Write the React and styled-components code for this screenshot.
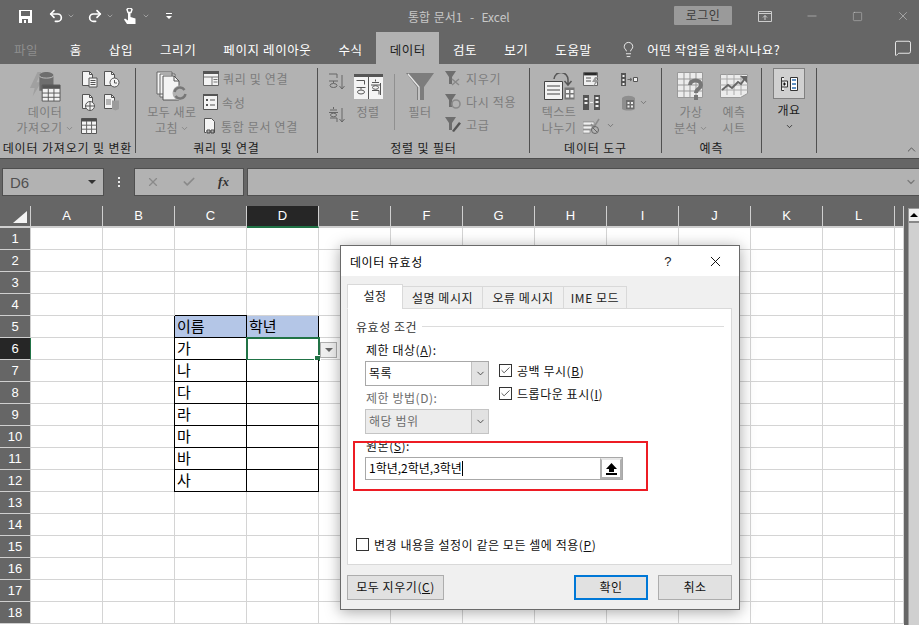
import React from 'react';
import styled, { createGlobalStyle } from 'styled-components';
import { X, Minus, Square, ChevronDown, ChevronUp, Lightbulb, MessageSquare, Undo2, Redo2, Check } from 'lucide-react';

const FONT = '"Noto Sans CJK KR", "Noto Sans", sans-serif';

const GlobalStyle = createGlobalStyle`
  html, body { margin: 0; padding: 0; overflow: hidden; }
  body { font-family: ${FONT}; font-size: 12px; background: #fff; }
  * { box-sizing: border-box; }
`;

const Page = styled.div`
  position: relative;
  width: 919px;
  height: 625px;
  overflow: hidden;
  display: flex;
  flex-direction: column;
  background: #666;
`;

/* title bar */
const TitleBar = styled.div`
  height: 32px;
  flex: none;
  display: flex;
  align-items: center;
  padding-left: 19px;
  color: #d0d0d0;
`;
const QuickTools = styled.div`
  width: 387px;
  display: flex;
  align-items: center;
  color: #fff;
`;
const QuickIcon = styled.span`
  display: flex;
  width: ${p => p.$w || 16}px;
  align-items: center;
`;
const Title = styled.div`
  width: 268px;
  text-align: left;
  padding-left: 2px;
  font-size: 12px;
  color: #c8c8c8;
  word-spacing: 1px;
`;
const Login = styled.div`
  width: 58px;
  height: 19px;
  margin-right: 26px;
  margin-top: -1px;
  background: #9a9a9a;
  border-radius: 1px;
  color: #3a3a3a;
  text-align: center;
  line-height: 18px;
  letter-spacing: .5px;
`;
const WinButtons = styled.div`
  display: flex;
  align-items: center;
  gap: 33px;
  color: #cfcfcf;
`;

/* tabs */
const TabRow = styled.div`
  height: 32px;
  flex: none;
  display: flex;
  align-items: stretch;
  color: #fff;
  font-size: 12.5px;
`;
const Tab = styled.div`
  padding: 2px 13.5px 0;
  display: flex;
  align-items: center;
  letter-spacing: .6px;
  background: ${p => (p.$active ? '#b2b2b2' : 'transparent')};
  color: ${p => (p.$active ? '#1e1e1e' : p.$file ? '#8e8e8e' : '#fff')};
  ${p => p.$file && 'margin: 0 4px 0 0; padding-left: 14px; padding-right: 14px;'}
`;
const TellMe = styled.div`
  display: flex;
  align-items: center;
  gap: 10px;
  margin-left: 15px;
  letter-spacing: .5px;
  padding-top: 2px;
`;
const Comment = styled.div`
  margin-left: auto;
  margin-right: 7px;
  display: flex;
  align-items: center;
`;

/* ribbon */
const Ribbon = styled.div`
  position: relative;
  height: 94px;
  flex: none;
  display: flex;
  background: #b2b2b2;
  padding-top: 4px;
`;
const Group = styled.div`
  width: ${p => p.$w}px;
  height: 85px;
  flex: none;
  display: flex;
  flex-direction: column;
  border-right: 1px solid #505050;
`;
const GroupBody = styled.div`
  height: 71px;
  flex: none;
  display: flex;
  padding-left: ${p => p.$pl || 0}px;
  gap: ${p => p.$gap || 0}px;
`;
const GroupLabel = styled.div`
  height: 17px;
  flex: none;
  line-height: 17px;
  text-align: center;
  color: #1c1c1c;
  white-space: nowrap;
  letter-spacing: .85px;
  font-size: 12px;
`;
const Big = styled.div`
  width: ${p => p.$w}px;
  flex: none;
  display: flex;
  flex-direction: column;
  align-items: center;
  color: ${p => (p.$on ? '#1c1c1c' : '#7c7c7c')};
  line-height: 16px;
  white-space: nowrap;
  letter-spacing: .5px;
`;
const BigIcon = styled.div`
  height: 36px;
  flex: none;
  display: flex;
  align-items: center;
  justify-content: center;
`;
const Arrow = styled(ChevronDown).attrs({ size: 9, strokeWidth: 2 })`
  margin-left: 2px;
  vertical-align: 0;
`;
const SmallGrid = styled.div`
  display: grid;
  grid-template-columns: ${p => p.$cols || '22px 22px'};
  grid-auto-rows: 23px;
  align-items: center;
  justify-items: start;
  margin-left: ${p => p.$ml || 0}px;
`;
const ToolWithArrow = styled.span`
  display: flex;
  align-items: center;
  gap: ${p => p.$gap || 3}px;
  color: #666;
`;
const SmallList = styled.div`
  display: flex;
  flex-direction: column;
  margin-left: ${p => p.$ml || 0}px;
  margin-top: ${p => p.$mt || -1}px;
`;
const SmallRow = styled.div`
  height: ${p => p.$h || 23}px;
  display: flex;
  align-items: center;
  gap: 4px;
  color: #7c7c7c;
  letter-spacing: .65px;
  white-space: nowrap;
`;
const InnerSep = styled.div`
  width: 1px;
  height: 56px;
  margin: 6px 10px 0 4px;
  background: #909090;
`;
const OutlineButton = styled.div`
  width: 32px;
  height: 31px;
  flex: none;
  background: #d0d0d0;
  border: 1px solid #808080;
  display: flex;
  align-items: center;
  justify-content: center;
  margin-bottom: 3px;
`;
const Collapse = styled(ChevronUp).attrs({ size: 13, strokeWidth: 1.5 })`
  position: absolute;
  right: 1px;
  bottom: 2px;
  color: #444;
`;

/* formula bar */
const FormulaBar = styled.div`
  height: 48px;
  flex: none;
  display: flex;
  padding: 9px 0 0 2px;
  align-items: flex-start;
  border-top: 1px solid #4c4c4c;
`;
const NameBox = styled.div`
  width: 102px;
  height: 28px;
  background: #b2b2b2;
  border: 1px solid #4f4f4f;
  display: flex;
  align-items: center;
  justify-content: space-between;
  padding: 0 7px 0 7px;
  font: 15px "Liberation Sans", sans-serif;
  color: #505050;
`;
const DownTri = styled.span`
  width: 0;
  height: 0;
  border-left: 4px solid transparent;
  border-right: 4px solid transparent;
  border-top: 4px solid ${p => p.$color || '#333'};
`;
const Dots = styled.div`
  width: 30px;
  height: 28px;
  display: flex;
  flex-direction: column;
  align-items: center;
  justify-content: center;
  gap: 2px;
  span { width: 2px; height: 2px; background: #e8e8e8; }
`;
const FormulaTools = styled.div`
  width: 110px;
  height: 28px;
  background: #b2b2b2;
  border: 1px solid #4f4f4f;
  display: flex;
  align-items: center;
  justify-content: space-around;
  padding: 0 3px 0 0;
  margin-right: 3px;
  color: #8a8a8a;
`;
const Fx = styled.span`
  font: italic bold 13px "Liberation Serif", serif;
  color: #333;
`;
const FormulaInput = styled.div`
  flex: 1;
  height: 28px;
  background: #b2b2b2;
  border: 1px solid #4f4f4f;
  border-right: 0;
  display: flex;
  align-items: center;
  justify-content: flex-end;
  padding-right: 2px;
  color: #7a7a7a;
`;

/* sheet */
const SheetArea = styled.div`
  flex: 1;
  min-height: 0;
  display: flex;
`;
const Sheet = styled.div`
  width: 904px;
  flex: none;
  display: grid;
  grid-template-columns: 31px repeat(12, 72px) 1fr;
  grid-template-rows: 22px;
  grid-auto-rows: 22px;
  align-content: start;
  background: #fff;
`;
const Corner = styled.div`
  background: #666;
  border-right: 1px solid #cfcfcf;
  border-bottom: 2px solid #cfcfcf;
  display: flex;
  align-items: flex-end;
  justify-content: flex-end;
  padding: 0 3px 3px 0;
  &::after {
    content: '';
    width: 0;
    height: 0;
    border-left: 14px solid transparent;
    border-bottom: 12px solid #f4f4f4;
  }
`;
const ColHead = styled.div`
  background: ${p => (p.$active ? '#262626' : '#666')};
  color: #fff;
  text-align: center;
  font: 13px/20px "Liberation Sans", sans-serif;
  border-right: 1px solid #cfcfcf;
  border-bottom: 2px solid ${p => (p.$active ? '#217346' : '#cfcfcf')};
`;
const RowHead = styled.div`
  background: ${p => (p.$active ? '#262626' : '#666')};
  color: #fff;
  text-align: center;
  font: 13px/22px "Liberation Sans", sans-serif;
  border-right: 1px solid ${p => (p.$active ? '#217346' : '#cfcfcf')};
  border-bottom: 1px solid #cfcfcf;
`;
const Cell = styled.div`
  position: relative;
  border-right: 1px solid ${p => (p.$box ? '#000' : '#d4d4d4')};
  border-bottom: 1px solid ${p => (p.$box ? '#000' : '#d4d4d4')};
  box-shadow: ${p => (p.$leftBox ? '-1px 0 0 #000' : 'none')}${p => (p.$topBox ? ', 0 -1px 0 #000' : '')};
  background: ${p => (p.$head ? '#b4c6e7' : '#fff')};
  color: #000;
  font-size: 15px;
  line-height: 20px;
  padding-left: 2px;
  z-index: ${p => (p.$box ? 1 : 0)};
`;
const Selection = styled.div`
  position: absolute;
  inset: -1px -2px -2px -1px;
  border: 2px solid #217346;
  z-index: 2;
  &::after {
    content: '';
    position: absolute;
    right: -3px;
    bottom: -3px;
    width: 5px;
    height: 5px;
    background: #217346;
    border: 1px solid #fff;
  }
`;
const CellDrop = styled.div`
  position: absolute;
  left: 73px;
  top: 4px;
  width: 17px;
  height: 16px;
  background: #f0f0f0;
  border: 1px solid #b0b0b0;
  display: flex;
  align-items: center;
  justify-content: center;
  z-index: 3;
`;
const ScrollColumn = styled.div`
  flex: 1;
  padding: 2px 0 0 4px;
  display: flex;
`;
const ScrollTrack = styled.div`
  flex: 1;
  background: #d0d0d0;
  border-left: 1px solid #999;
`;
const ScrollUp = styled.div`
  height: 15px;
  background: #efefef;
  border-top: 1px solid #999;
  border-bottom: 2px solid #888;
  display: flex;
  align-items: center;
  justify-content: center;
  &::after {
    content: '';
    border-left: 4px solid transparent;
    border-right: 4px solid transparent;
    border-bottom: 4px solid #000;
  }
`;

/* dialog */
const Dialog = styled.div`
  position: absolute;
  left: 340px;
  top: 245px;
  width: 400px;
  height: 365px;
  background: #f0f0f0;
  border: 1px solid #6a6a6a;
  box-shadow: 0 2px 14px rgba(0, 0, 0, .35);
  z-index: 10;
  display: flex;
  flex-direction: column;
  color: #000;
  letter-spacing: .55px;
`;
const DialogTitle = styled.div`
  height: 30px;
  flex: none;
  background: #fff;
  display: flex;
  align-items: center;
  padding: 0 15px 0 9px;
`;
const Help = styled.span`
  margin-left: auto;
  margin-right: 35px;
  font: 13px "Liberation Sans", sans-serif;
  color: #222;
`;
const DialogTabs = styled.div`
  display: flex;
  align-items: flex-end;
  height: 32px;
  flex: none;
  padding-left: 6px;
  position: relative;
  z-index: 1;
`;
const DTab = styled.div`
  height: ${p => (p.$active ? 25 : 23)}px;
  width: ${p => p.$w}px;
  background: ${p => (p.$active ? '#fff' : '#f0f0f0')};
  border: 1px solid #d9d9d9;
  border-bottom: ${p => (p.$active ? '1px solid #fff' : '1px solid #d9d9d9')};
  margin-left: ${p => (p.$active ? 0 : -1)}px;
  margin-bottom: -1px;
  text-align: center;
  line-height: 21px;
  color: #222;
  white-space: nowrap;
`;
const Panel = styled.div`
  width: 385px;
  height: 257px;
  flex: none;
  margin-left: 6px;
  background: #fff;
  border: 1px solid #d9d9d9;
  padding: 8px 7px 0 8px;
  display: flex;
  flex-direction: column;
`;
const Legend = styled.div`
  display: flex;
  align-items: center;
  gap: 5px;
  height: 18px;
  color: #333;
  &::after { content: ''; flex: 1; height: 1px; background: #dcdcdc; }
`;
const Columns = styled.div`
  display: flex;
  margin-left: 9px;
  margin-top: 6px;
`;
const LeftCol = styled.div`
  width: 134px;
  display: flex;
  flex-direction: column;
`;
const Field = styled.div`
  height: 18px;
  line-height: 18px;
  margin-bottom: 2px;
  padding-left: 1px;
  color: ${p => (p.$off ? '#6d6d6d' : '#111')};
  white-space: nowrap;
`;
const Select = styled.div`
  width: 124px;
  height: 25px;
  margin-bottom: 3px;
  display: flex;
  border: 1px solid ${p => (p.$off ? '#c4c4c4' : '#a8a8a8')};
  background: ${p => (p.$off ? '#ececec' : '#fff')};
  color: ${p => (p.$off ? '#6d6d6d' : '#111')};
  line-height: 21px;
  span:first-child { flex: 1; padding-left: 3px; }
`;
const SelectBtn = styled.span`
  width: 17px;
  background: #e2e2e2;
  border-left: 1px solid #c0c0c0;
  display: flex;
  align-items: center;
  justify-content: center;
  color: #444;
`;
const ChecksCol = styled.div`
  display: flex;
  flex-direction: column;
  gap: 5px;
  padding-top: 20px;
`;
const CheckRow = styled.div`
  display: flex;
  align-items: center;
  gap: 5px;
  height: 18px;
  color: #111;
  white-space: nowrap;
`;
const Box = styled.span`
  width: 13px;
  height: 13px;
  flex: none;
  border: 1px solid #333;
  background: #fff;
  display: flex;
  align-items: center;
  justify-content: center;
`;
const Source = styled.div`
  margin-left: 9px;
`;
const SourceInput = styled.div`
  width: 258px;
  height: 23px;
  border: 1px solid #a8a8a8;
  display: flex;
  justify-content: space-between;
  line-height: 20px;
  padding-left: 3px;
  letter-spacing: 0;
`;
const Caret = styled.span`
  display: inline-block;
  width: 1px;
  height: 15px;
  background: #000;
  vertical-align: -3px;
`;
const Collapser = styled.span`
  width: 22px;
  height: 21px;
  background: #fff;
  border: 2px solid #ddd;
  border-color: #e8e8e8 #b0b0b0 #b0b0b0 #b0b0b0;
  display: flex;
  align-items: center;
  justify-content: center;
`;
const Underline = styled.u`
  text-underline-offset: 1px;
`;
const ApplyAll = styled.div`
  margin-top: auto;
  margin-bottom: 11px;
`;
const Footer = styled.div`
  display: flex;
  padding: 10px 7px 0 6px;
`;
const Btn = styled.div`
  width: ${p => p.$w || 74}px;
  height: 25px;
  margin-left: ${p => p.$ml || 0}px;
  background: #e1e1e1;
  border: ${p => (p.$primary ? '2px solid #0078d7' : '1px solid #adadad')};
  text-align: center;
  line-height: ${p => (p.$primary ? 19 : 21)}px;
  color: #111;
`;
const RedBox = styled.div`
  position: absolute;
  left: 12px;
  top: 195px;
  width: 295px;
  height: 50px;
  border: 2px solid #ed1c24;
  z-index: 2;
`;

/* icons, drawn for this ribbon */
const Svg = ({ w, h, vb, children }) => (
  <svg width={w} height={h} viewBox={vb || `0 0 ${w} ${h}`} style={{ display: 'block' }}>{children}</svg>
);
const SaveIcon = () => (
  <Svg w={13} h={13}>
    <path d="M0 0h13v13H0z" fill="#fff" />
    <path d="M2 1h9v5H2zM3 9h6v4H3z" fill="#666" />
    <path d="M5 10h2v3H5z" fill="#fff" />
  </Svg>
);
const TouchIcon = () => (
  <Svg w={15} h={17}>
    <path d="M5 1.500a3 3 0 0 1 5 0l-1 3H6z" fill="none" stroke="#fff" strokeWidth="1.4" />
    <path d="M6 5h2.500v4l5 1.500V16H5L2 11.500l1-1 3 2z" fill="#fff" />
  </Svg>
);
const Customize = () => (
  <Svg w={8} h={8}>
    <path d="M1 1h6v1H1zM1 4h6L4 7z" fill="#fff" />
  </Svg>
);
const PageIcon = ({ badge }) => (
  <Svg w={17} h={17}>
    <path d="M1.500 .5h7l3 3V14.500h-10z" fill="#f4f4f4" stroke="#555" />
    <path d="M8.500 .5v3h3" fill="none" stroke="#555" />
    {badge === 'lines' && <path d="M8 7h8v9H8z" fill="#f4f4f4" stroke="#555" />}
    {badge === 'lines' && <path d="M9.500 9.500h5M9.500 11.500h5M9.500 13.500h5" stroke="#555" />}
    {badge === 'clock' && <circle cx="11.500" cy="11.500" r="4.500" fill="#f4f4f4" stroke="#555" />}
    {badge === 'clock' && <path d="M11.500 9v3h2.500" fill="none" stroke="#555" />}
    {badge === 'globe' && <circle cx="9" cy="12" r="4.500" fill="#f4f4f4" stroke="#555" />}
    {badge === 'globe' && <path d="M4.500 12h9M9 7.500v9" stroke="#555" />}
    {badge === 'db' && <path d="M3 6h5M3 8h5M3 10h5" stroke="#777" />}
    {badge === 'db' && <path d="M9 6.500h7V15l-3.500 1.500L9 15z" fill="#9c9c9c" />}
  </Svg>
);
const TableIcon = ({ w = 16, h = 16 }) => (
  <Svg w={w} h={h}>
    <path d={`M.5 .5h${w - 1}v${h - 1}h-${w - 1}z`} fill="#f4f4f4" stroke="#555" />
    <path d={`M.5 .5h${w - 1}v3h-${w - 1}z`} fill="#4c4c4c" />
    <path d={`M.5 ${h * 0.45}h${w - 1}M.5 ${h * 0.7}h${w - 1}M${w * 0.35} 3v${h - 3}M${w * 0.66} 3v${h - 3}`} stroke="#666" />
  </Svg>
);
const DataIcon = () => (
  <Svg w={32} h={32} vb="0 0 34 34">
    <path d="M9 2 1 19h5l-2 9 9-15H8l5-11z" fill="#a0a0a0" />
    <path d="M11 6c0-5 15-5 15 0v16H11z" fill="#6e6e6e" />
    <path d="M11 6c0 3.500 15 3.500 15 0" fill="none" stroke="#c0c0c0" />
    <path d="M14 16h19v17H14z" fill="#f2f2f2" stroke="#555" />
    <path d="M14 16h19v4H14z" fill="#555" />
    <path d="M14 24.500h19M14 29h19M20.500 20v13M26.500 20v13" stroke="#555" />
  </Svg>
);
const RefreshIcon = () => (
  <Svg w={32} h={30}>
    <path d="M1 1h15v22H1zM4 3h15v23H4z" fill="#f4f4f4" stroke="#666" />
    <path d="M7 5h11l5 5v19H7z" fill="#f4f4f4" stroke="#555" />
    <path d="M18 5v5h5" fill="none" stroke="#555" />
    <circle cx="24" cy="22" r="7.500" fill="#b2b2b2" />
    <path d="M18.500 21a5.500 5.500 0 0 1 10-2M29.500 23a5.500 5.500 0 0 1-10 2" fill="none" stroke="#777" strokeWidth="2.400" />
  </Svg>
);
const QueryIcon = () => (
  <Svg w={16} h={15}>
    <path d="M.5 .5h15v14H.5z" fill="#f4f4f4" stroke="#666" />
    <path d="M0 0h16v3H0z" fill="#555" />
    <path d="M1 6h14M9 6v8M10.500 8.500h4M10.500 11h4" stroke="#777" />
  </Svg>
);
const PropsIcon = () => (
  <Svg w={15} h={16}>
    <path d="M.5 .5h14v15H.5z" fill="#f4f4f4" stroke="#555" />
    <path d="M0 0h15v2H0z" fill="#555" />
    <path d="M3 5h2v2H3zM3 10h2v2H3z" fill="#555" />
    <path d="M7 6h5M7 11h5" stroke="#555" />
  </Svg>
);
const LinkIcon = () => (
  <Svg w={14} h={16}>
    <path d="M1.500 .5h7l3 3V14.500h-10z" fill="#f4f4f4" stroke="#555" />
    <path d="M3 12.500h8v3H3z" fill="#b2b2b2" />
    <path d="M4 12h3v3H4zM8 12h3v3H8z" fill="none" stroke="#444" />
  </Svg>
);
const SortMarks = ({ flip, color }) => (
  <g fill="none" stroke={color}>
    {flip ? (
      <path d="M4.500 0v2M1 3h7M0 5.500h9" />
    ) : (
      <path d="M0 0h8v4M0 7h9M4.500 7v2" />
    )}
    {flip ? (
      <ellipse cx="4.500" cy="8" rx="3" ry="1.800" />
    ) : (
      <ellipse cx="4.500" cy="11.500" rx="3.500" ry="2" />
    )}
    {flip && <path d="M1 11h7v4" />}
  </g>
);
const SortSmall = ({ flip }) => (
  <Svg w={17} h={19}>
    <g transform="translate(0 2)"><SortMarks flip={flip} color="#666" /></g>
    <path d="M13 3v14M10.500 14l2.500 3 2.500-3" fill="none" stroke="#666" />
  </Svg>
);
const SortBig = () => (
  <Svg w={29} h={25}>
    <path d="M0 0h29v25H0z" fill="#f4f4f4" />
    <path d="M0 0h29v3H0z" fill="#555" />
    <path d="M14.500 3v22" stroke="#555" />
    <g transform="translate(2.500 6.500)"><SortMarks color="#555" /></g>
    <g transform="translate(17 5.500)"><SortMarks flip color="#555" /></g>
    <path d="M26.500 9v12" stroke="#555" />
  </Svg>
);
const FunnelBig = () => (
  <Svg w={28} h={27}>
    <path d="M0 0h28L18 14v13h-7V14z" fill="#7d7d7d" />
    <path d="M2 1l11 13v13" fill="none" stroke="#e8e8e8" strokeWidth="1.300" />
  </Svg>
);
const Funnel = ({ mark }) => (
  <Svg w={17} h={15}>
    <path d="M0 0h11L7 6v7H4V6z" fill="#6e6e6e" />
    {mark === 'x' && <path d="M7 8l7 6M14 8l-7 6" stroke="#888" strokeWidth="1.400" />}
    {mark === 'r' && <circle cx="11" cy="10" r="4" fill="none" stroke="#8a8a8a" strokeWidth="1.600" />}
    {mark === 'p' && <path d="M7 14l7-9 2 1.500L9 15z" fill="#555" />}
  </Svg>
);
const SplitIcon = () => (
  <Svg w={31} h={27}>
    <path d="M.5 8.500h18v18H.5z" fill="#f4f4f4" stroke="#444" />
    <path d="M3 13h13M3 17h13M3 21h13" stroke="#444" />
    <path d="M20.500 14.500h10v12h-10z" fill="#777" />
    <path d="M22 17h3v3h-3zM26.500 17h3v3h-3zM22 21.500h3v3h-3zM26.500 21.500h3v3h-3z" fill="#f4f4f4" />
    <path d="M10 6a7 7 0 0 1 14 1v4M20.500 8l3.500 4 3.500-4" fill="none" stroke="#555" strokeWidth="1.500" />
  </Svg>
);
const Tool = ({ kind }) => {
  if (kind === 'flash') {
    return (
      <Svg w={17} h={15}>
        <path d="M.5 .5h14v13H.5z" fill="#f0f0f0" stroke="#666" />
        <path d="M1 1h13v2H1zM3 6h5M3 9h5" stroke="#555" />
        <path d="M12 5l-3 5h3l-2 5 6-7h-3l2-3z" fill="#999" />
      </Svg>
    );
  }
  if (kind === 'dup') {
    return (
      <Svg w={17} h={15}>
        <path d="M0 0h6v15H0z" fill="#555" />
        <path d="M1.500 3h3v2h-3zM1.500 7h3v2h-3z" fill="#f0f0f0" />
        <path d="M11 0h6v15h-6z" fill="#555" />
        <path d="M12.500 2h3v2h-3zM12.500 6h3v2h-3zM12.500 10h3v2h-3z" fill="#f0f0f0" />
        <path d="M7 7.500h3" stroke="#f0f0f0" />
      </Svg>
    );
  }
  if (kind === 'valid') {
    return (
      <Svg w={17} h={16}>
        <path d="M0 4h11v3H0zM0 8h9v3H0zM0 12h7v3H0z" fill="#f0f0f0" stroke="#666" strokeWidth=".5" />
        <path d="M8 6l3 3 5-8" fill="none" stroke="#8c8c8c" strokeWidth="1.500" />
        <circle cx="12" cy="12" r="3.500" fill="none" stroke="#666" />
        <path d="M10 10l4 4" stroke="#666" />
      </Svg>
    );
  }
  if (kind === 'merge') {
    return (
      <Svg w={17} h={13}>
        <path d="M0 0h5v13H0z" fill="#555" />
        <path d="M1.500 2h2v2h-2zM1.500 6h2v2h-2zM1.500 10h2v2h-2z" fill="#f0f0f0" />
        <path d="M6.500 6.500h4M9 5l2 1.500L9 8" fill="none" stroke="#666" />
        <path d="M12.500 4.500h4v4h-4z" fill="#f0f0f0" stroke="#555" />
      </Svg>
    );
  }
  return (
    <Svg w={15} h={16}>
      <path d="M1 3c3-3 10-3 13 0v11c-3 2-10 2-13 0z" fill="#8e8e8e" />
      <path d="M5 5h8v9H5z" fill="#6e6e6e" />
      <path d="M6.500 7h2v2h-2zM10 7h2v2h-2zM6.500 10.500h2v2h-2zM10 10.500h2v2h-2z" fill="#eee" />
    </Svg>
  );
};
const WhatIfIcon = () => (
  <Svg w={29} h={29}>
    <path d="M.5 .5h25v25H.5z" fill="#ececec" stroke="#999" />
    <path d="M7 0v26M13 0v26M19 0v26M0 7h26M0 13h26M0 19h26" stroke="#999" />
    <path d="M13 13c0-6 11-6 11 0 0 4-5 3.500-5 8" fill="none" stroke="#777" strokeWidth="4" />
    <path d="M17 23h4v5h-4z" fill="#777" />
  </Svg>
);
const ForecastIcon = () => (
  <Svg w={28} h={25}>
    <path d="M.5 .5h27v19l-7 4H.5z" fill="#ececec" stroke="#999" />
    <path d="M0 5h28M0 11h28M0 16h28M7 0v21M14 0v21M21 0v21" stroke="#aaa" />
    <path d="M2 16l6-5 4 3 6-6 3 2 5-7" fill="none" stroke="#666" strokeWidth="2" />
    <path d="M20 2h7v7z" fill="#666" />
  </Svg>
);
const OutlineIcon = () => (
  <Svg w={17} h={14}>
    <path d="M3 .5H.5v13H3M.5 4h6v6h-6z" fill="#f0f0f0" stroke="#333" />
    <path d="M2 7h3M3.500 5.500v3" stroke="#111" />
    <path d="M9.500 .5h7v13h-7z" fill="#fff" stroke="#333" />
    <path d="M11 3h4M11 7h4M11 11h4" stroke="#2b6cb0" strokeWidth="1.500" />
  </Svg>
);
const ShareIcon = () => (
  <Svg w={14} h={11}>
    <path d="M.5 .5h13v10H.5zM0 2.500h14M7 9V4.500M5 6.500l2-2 2 2" fill="none" stroke="#ccc" />
  </Svg>
);
const UpArrow = () => (
  <Svg w={11} h={12}>
    <path d="M5.500 0 11 6H8v3H3V6H0zM0 10h11v2H0z" fill="#000" />
  </Svg>
);

const TABS = ['홈', '삽입', '그리기', '페이지 레이아웃', '수식'];
const COLS = ['A', 'B', 'C', 'D', 'E', 'F', 'G', 'H', 'I', 'J', 'K', 'L', ''];
const NAMES = { 6: '가', 7: '나', 8: '다', 9: '라', 10: '마', 11: '바', 12: '사' };
const ROWS = Array.from({ length: 18 }, (_, i) => i + 1);

const renderCell = (row, col) => {
  const inTable = row >= 5 && row <= 12;
  if (col === 'C' && inTable) {
    return (
      <Cell key={col} $box $leftBox $topBox={row === 5} $head={row === 5}>
        {row === 5 ? '이름' : NAMES[row]}
      </Cell>
    );
  }
  if (col === 'D' && inTable) {
    return (
      <Cell key={col} $box $topBox={row === 5} $head={row === 5}>
        {row === 5 && '학년'}
        {row === 6 && <Selection />}
        {row === 6 && <CellDrop><DownTri $color="#666" /></CellDrop>}
      </Cell>
    );
  }
  return <Cell key={col} />;
};

export default function App() {
  return (
    <Page>
      <GlobalStyle />
      <TitleBar>
        <QuickTools>
          <QuickIcon $w={29}><SaveIcon /></QuickIcon>
          <QuickIcon $w={19}><Undo2 size={16} strokeWidth={2.5} /></QuickIcon>
          <QuickIcon $w={20}><ChevronDown size={8} color="#bbb" /></QuickIcon>
          <QuickIcon $w={19}><Redo2 size={16} strokeWidth={2.5} /></QuickIcon>
          <QuickIcon $w={16}><ChevronDown size={8} color="#bbb" /></QuickIcon>
          <QuickIcon $w={20}><TouchIcon /></QuickIcon>
          <QuickIcon $w={23}><ChevronDown size={8} color="#bbb" /></QuickIcon>
          <QuickIcon><Customize /></QuickIcon>
        </QuickTools>
        <Title>통합 문서1&nbsp; -&nbsp; Excel</Title>
        <Login>로그인</Login>
        <WinButtons>
          <ShareIcon />
          <Minus size={14} strokeWidth={1} />
          <Square size={11} strokeWidth={1} />
          <X size={14} strokeWidth={1} />
        </WinButtons>
      </TitleBar>

      <TabRow>
        <Tab $file>파일</Tab>
        {TABS.map(t => <Tab key={t}>{t}</Tab>)}
        <Tab $active>데이터</Tab>
        <Tab>검토</Tab>
        <Tab>보기</Tab>
        <Tab>도움말</Tab>
        <TellMe>
          <Lightbulb size={17} strokeWidth={1.2} />
          어떤 작업을 원하시나요?
        </TellMe>
        <Comment><MessageSquare size={18} strokeWidth={1.1} /></Comment>
      </TabRow>

      <Ribbon>
        <Group $w={136}>
          <GroupBody $pl={12}>
            <Big $w={66}>
              <BigIcon><DataIcon /></BigIcon>
              <span>데이터</span>
              <span>가져오기<Arrow /></span>
            </Big>
            <SmallGrid $cols="22px 22px" $ml={3}>
              <PageIcon badge="lines" />
              <PageIcon badge="clock" />
              <PageIcon badge="globe" />
              <PageIcon badge="db" />
              <TableIcon />
            </SmallGrid>
          </GroupBody>
          <GroupLabel>데이터 가져오기 및 변환</GroupLabel>
        </Group>

        <Group $w={182}>
          <GroupBody $pl={8}>
            <Big $w={56}>
              <BigIcon><RefreshIcon /></BigIcon>
              <span>모두 새로</span>
              <span>고침<Arrow /></span>
            </Big>
            <SmallList $ml={3} $mt={-2}>
              <SmallRow $h={24}><QueryIcon />쿼리 및 연결</SmallRow>
              <SmallRow $h={24}><PropsIcon />속성</SmallRow>
              <SmallRow $h={24}><LinkIcon />통합 문서 연결</SmallRow>
            </SmallList>
          </GroupBody>
          <GroupLabel>쿼리 및 연결</GroupLabel>
        </Group>

        <Group $w={212}>
          <GroupBody $pl={11}>
            <SmallList $mt={-3}>
              <SmallRow $h={33}><SortSmall /></SmallRow>
              <SmallRow $h={33}><SortSmall flip /></SmallRow>
            </SmallList>
            <Big $w={44}>
              <BigIcon><SortBig /></BigIcon>
              <span>정렬</span>
            </Big>
            <InnerSep />
            <Big $w={30}>
              <BigIcon><FunnelBig /></BigIcon>
              <span>필터</span>
            </Big>
            <SmallList $ml={10}>
              <SmallRow><Funnel mark="x" />지우기</SmallRow>
              <SmallRow><Funnel mark="r" />다시 적용</SmallRow>
              <SmallRow><Funnel mark="p" />고급</SmallRow>
            </SmallList>
          </GroupBody>
          <GroupLabel>정렬 및 필터</GroupLabel>
        </Group>

        <Group $w={132}>
          <GroupBody $pl={10}>
            <Big $w={38}>
              <BigIcon><SplitIcon /></BigIcon>
              <span>텍스트</span>
              <span>나누기</span>
            </Big>
            <SmallGrid $cols="38px 30px" $ml={5}>
              <Tool kind="flash" />
              <Tool kind="merge" />
              <Tool kind="dup" />
              <ToolWithArrow><Tool kind="rel" /><ChevronDown size={9} strokeWidth={2} /></ToolWithArrow>
              <ToolWithArrow $gap={6}><Tool kind="valid" /><ChevronDown size={9} strokeWidth={2} /></ToolWithArrow>
            </SmallGrid>
          </GroupBody>
          <GroupLabel>데이터 도구</GroupLabel>
        </Group>

        <Group $w={100}>
          <GroupBody $pl={8} $gap={7}>
            <Big $w={42}>
              <BigIcon><WhatIfIcon /></BigIcon>
              <span>가상</span>
              <span>분석<Arrow /></span>
            </Big>
            <Big $w={30}>
              <BigIcon><ForecastIcon /></BigIcon>
              <span>예측</span>
              <span>시트</span>
            </Big>
          </GroupBody>
          <GroupLabel>예측</GroupLabel>
        </Group>

        <Group $w={55}>
          <GroupBody $pl={11}>
            <Big $w={32} $on>
              <OutlineButton><OutlineIcon /></OutlineButton>
              <span>개요</span>
              <span><ChevronDown size={9} strokeWidth={2} /></span>
            </Big>
          </GroupBody>
        </Group>
        <Collapse />
      </Ribbon>

      <FormulaBar>
        <NameBox>D6<DownTri /></NameBox>
        <Dots><span /><span /><span /></Dots>
        <FormulaTools>
          <X size={14} strokeWidth={2} />
          <Check size={14} strokeWidth={3} />
          <Fx>fx</Fx>
        </FormulaTools>
        <FormulaInput><ChevronDown size={12} strokeWidth={2.5} /></FormulaInput>
      </FormulaBar>

      <SheetArea>
        <Sheet>
          <Corner />
          {COLS.map(c => <ColHead key={c} $active={c === 'D'}>{c}</ColHead>)}
          {ROWS.map(r => (
            <React.Fragment key={r}>
              <RowHead $active={r === 6}>{r}</RowHead>
              {COLS.map(c => renderCell(r, c || 'M'))}
            </React.Fragment>
          ))}
        </Sheet>
        <ScrollColumn>
          <ScrollTrack><ScrollUp /></ScrollTrack>
        </ScrollColumn>
      </SheetArea>

      <Dialog>
        <DialogTitle>
          데이터 유효성
          <Help>?</Help>
          <X size={17} strokeWidth={1.3} />
        </DialogTitle>
        <DialogTabs>
          <DTab $active $w={56}>설정</DTab>
          <DTab $w={81}>설명 메시지</DTab>
          <DTab $w={82}>오류 메시지</DTab>
          <DTab $w={64}>IME 모드</DTab>
        </DialogTabs>
        <Panel>
          <Legend>유효성 조건</Legend>
          <Columns>
            <LeftCol>
              <Field>제한 대상(<Underline>A</Underline>):</Field>
              <Select><span>목록</span><SelectBtn><ChevronDown size={11} /></SelectBtn></Select>
              <Field $off>제한 방법(D):</Field>
              <Select $off><span>해당 범위</span><SelectBtn><ChevronDown size={11} /></SelectBtn></Select>
            </LeftCol>
            <ChecksCol>
              <CheckRow><Box><Check size={11} strokeWidth={1.5} /></Box><span>공백 무시(<Underline>B</Underline>)</span></CheckRow>
              <CheckRow><Box><Check size={11} strokeWidth={1.5} /></Box><span>드롭다운 표시(<Underline>I</Underline>)</span></CheckRow>
            </ChecksCol>
          </Columns>
          <Source>
            <Field>원본(<Underline>S</Underline>):</Field>
            <SourceInput>
              <span>1학년,2학년,3학년<Caret /></span>
              <Collapser><UpArrow /></Collapser>
            </SourceInput>
          </Source>
          <ApplyAll>
            <CheckRow><Box /><span>변경 내용을 설정이 같은 모든 셀에 적용(<Underline>P</Underline>)</span></CheckRow>
          </ApplyAll>
        </Panel>
        <Footer>
          <Btn $w={97}>모두 지우기(<Underline>C</Underline>)</Btn>
          <Btn $primary $ml={130}>확인</Btn>
          <Btn $ml={10}>취소</Btn>
        </Footer>
        <RedBox />
      </Dialog>
    </Page>
  );
}
